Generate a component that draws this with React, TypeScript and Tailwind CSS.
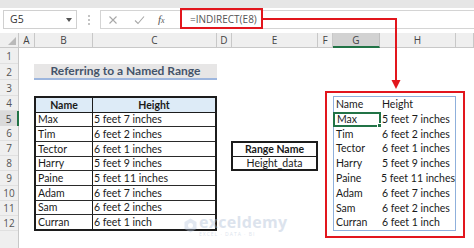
import React from "react";

const sheetRows: { n: number; h: string }[] = [
  { n: 1, h: "h-[16px]" },
  { n: 2, h: "h-[16px]" },
  { n: 3, h: "h-[16px]" },
  { n: 4, h: "h-[15px]" },
  { n: 5, h: "h-[15px]" },
  { n: 6, h: "h-[15px]" },
  { n: 7, h: "h-[15px]" },
  { n: 8, h: "h-[15px]" },
  { n: 9, h: "h-[15px]" },
  { n: 10, h: "h-[15px]" },
  { n: 11, h: "h-[15px]" },
  { n: 12, h: "h-[15px]" },
];

const data: [string, string][] = [
  ["Max", "5 feet 7 inches"],
  ["Tim", "6 feet 2 inches"],
  ["Tector", "6 feet 1 inches"],
  ["Harry", "5 feet 9 inches"],
  ["Paine", "5 feet 11 inches"],
  ["Adam", "6 feet 7 inches"],
  ["Sam", "6 feet 2 inches"],
  ["Curran", "6 feet 1 inch"],
];

const colHeaders = ["A", "B", "C", "D", "E", "F", "G", "H", ""];

export default function App() {
  return (
    <div
      className="relative w-[474px] h-[248px] overflow-hidden bg-white flex flex-col"
      style={{ fontFamily: "Lato, 'Open Sans', sans-serif" }}
    >
      {/* ribbon bottom band */}
      <div className="h-[8px] bg-[#e6e6e6] shrink-0" />

      {/* formula bar */}
      <div className="h-[25px] shrink-0 flex items-start pt-[2px] bg-white">
        <div className="ml-[3px] w-[74px] h-[19px] border border-[#d0d0d0] bg-white flex items-center justify-between pl-[6px] pr-[4px]">
          <span className="text-[10.5px] leading-none text-[#333]" style={{ fontFamily: "'Open Sans', sans-serif" }}>G5</span>
          <span className="w-0 h-0 border-l-[3px] border-r-[3px] border-t-[4px] border-l-transparent border-r-transparent border-t-[#555]" />
        </div>
        <div className="w-[23px] h-[19px] flex items-center justify-center">
          <div className="flex flex-col gap-[2px]">
            <span className="w-[2px] h-[2px] bg-[#c4c4c4]" />
            <span className="w-[2px] h-[2px] bg-[#c4c4c4]" />
            <span className="w-[2px] h-[2px] bg-[#c4c4c4]" />
          </div>
        </div>
        <div className="flex-1 h-[19px] border-l border-t border-b border-[#d4d4d4] flex items-center">
          <div className="flex items-center pl-[7px]">
            <svg width="10" height="10" viewBox="0 0 10 10">
              <path d="M1.5 1.5 L8.5 8.5 M8.5 1.5 L1.5 8.5" stroke="#a8a8a8" strokeWidth="1.1" fill="none" />
            </svg>
            <svg className="ml-[16px]" width="11" height="10" viewBox="0 0 11 10">
              <path d="M1 5.5 L4 8.5 L10 1.5" stroke="#a8a8a8" strokeWidth="1.1" fill="none" />
            </svg>
            <span className="ml-[13px] text-[11px] leading-none italic text-[#555]" style={{ fontFamily: "'Liberation Serif', serif" }}>
              f<span className="text-[8px]">x</span>
            </span>
          </div>
        </div>
      </div>

      {/* formula red box */}
      <div className="absolute left-[180px] top-[8px] w-[83px] h-[21px] border-2 border-[#e2161d] flex items-center pl-[8px]">
        <span className="text-[10px] leading-none text-[#555] whitespace-nowrap" style={{ fontFamily: "'Open Sans', sans-serif" }}>=INDIRECT(E8)</span>
      </div>

      {/* sheet */}
      <div className="flex-1 min-h-0 grid grid-cols-[19px_16px_58px_124px_15px_86px_15px_47px_76px_1fr] grid-rows-[15px_16px_16px_16px_15px_15px_15px_15px_15px_15px_15px_15px_15px_1fr]">
        {/* corner */}
        <div className="row-start-1 col-start-1 bg-[#efefef] border-r border-b border-[#c8c8c8] flex items-end justify-end p-[2px]">
          <svg width="8" height="8" viewBox="0 0 8 8">
            <polygon points="8,0 8,8 0,8" fill="#b9b9b9" />
          </svg>
        </div>
        {colHeaders.map((c) => (
          <div
            key={c || "I"}
            className={
              c === "G"
                ? "row-start-1 min-h-0 bg-[#d2d2d2] border-r border-[#c0c0c0] border-b-2 border-b-[#217346] flex items-center justify-center text-[10px] leading-none text-[#444]"
                : "row-start-1 min-h-0 bg-[#efefef] border-r border-b border-[#c8c8c8] flex items-center justify-center text-[10px] leading-none text-[#444]"
            }
            style={{ fontFamily: "'Open Sans', sans-serif" }}
          >
            {c}
          </div>
        ))}

        {/* row headers */}
        <div className="col-start-1 row-start-2 row-span-13 min-h-0 flex flex-col bg-[#efefef] border-r border-[#c8c8c8]" style={{ fontFamily: "'Open Sans', sans-serif" }}>
          {sheetRows.map((r) => (
            <div
              key={r.n}
              className={
                r.n === 5
                  ? `${r.h} shrink-0 flex items-center justify-center text-[10px] leading-none text-[#444] bg-[#dadada] border-r-2 border-[#217346] -mr-px`
                  : `${r.h} shrink-0 flex items-center justify-center text-[10px] leading-none text-[#555] border-b border-[#e0e0e0]`
              }
            >
              {r.n}
            </div>
          ))}
          <div className="flex-1" />
        </div>

        {/* title */}
        <div className="col-start-3 col-span-2 row-start-3 min-h-0 -ml-px bg-[#e7e6e6] border-b-2 border-[#9db6de] flex items-center justify-center">
          <span className="text-[12px] leading-none font-bold text-[#44546a] whitespace-nowrap">Referring to a Named Range</span>
        </div>

        {/* Name / Height table */}
        <div className="col-start-3 col-span-2 row-start-5 row-span-9 min-h-0 -ml-px border-2 border-[#1c1c1c] flex flex-col text-[10.5px] leading-none text-[#1a1a1a] whitespace-nowrap">
          <div className="flex-1 min-h-0 flex bg-[#ddebf7] border-b border-[#1c1c1c] font-bold">
            <div className="w-[57px] border-r border-[#1c1c1c] flex items-center justify-center">Name</div>
            <div className="flex-1 flex items-center justify-center">Height</div>
          </div>
          {data.map(([n, h], i) => (
            <div key={n} className={i < data.length - 1 ? "flex-1 min-h-0 flex border-b border-[#2a2a2a]" : "flex-1 min-h-0 flex"}>
              <div className="w-[57px] border-r border-[#1c1c1c] flex items-center pl-[2px]">{n}</div>
              <div className="flex-1 flex items-center pl-[1px]">{h}</div>
            </div>
          ))}
        </div>

        {/* Range Name table */}
        <div className="col-start-6 row-start-8 row-span-2 min-h-0 -ml-px border-2 border-[#1c1c1c] flex flex-col text-[10.5px] leading-none text-[#1a1a1a] whitespace-nowrap">
          <div className="flex-1 min-h-0 flex items-center justify-center font-bold border-b border-[#1c1c1c]">Range Name</div>
          <div className="flex-1 min-h-0 flex items-center justify-center">Height_data</div>
        </div>

        {/* result range */}
        <div className="col-start-8 col-span-2 row-start-5 row-span-9 min-h-0 border border-[#8fb0dc] flex flex-col text-[10.5px] leading-none text-[#1a1a1a] whitespace-nowrap">
          <div className="flex-1 min-h-0 flex">
            <div className="w-[47px] flex items-center pl-[2px]">Name</div>
            <div className="flex-1 flex items-center pl-[1px]">Height</div>
          </div>
          {data.map(([n, h], i) => (
            <div key={n} className="flex-1 min-h-0 flex">
              <div
                className={
                  i === 0
                    ? "relative w-[48px] -ml-px border-2 border-[#217346] flex items-center pl-[2px]"
                    : "w-[47px] flex items-center pl-[2px]"
                }
              >
                {n}
                {i === 0 && (
                  <span className="absolute -right-[3px] -bottom-[3px] w-[5px] h-[5px] bg-[#217346] border border-white" />
                )}
              </div>
              <div className="flex-1 flex items-center pl-[1px]">{h}</div>
            </div>
          ))}
        </div>
      </div>

      {/* red highlight rectangle */}
      <div className="absolute left-[325px] top-[91px] w-[140px] h-[147px] border-2 border-[#e2161d] pointer-events-none" />

      {/* red connector arrow */}
      <svg className="absolute left-0 top-0 pointer-events-none" width="474" height="248">
        <polyline points="263,19 396,19 396,82" stroke="#e2161d" strokeWidth="2" fill="none" />
        <polygon points="391.5,80 400.5,80 396,89" fill="#e2161d" />
      </svg>

      {/* watermark */}
      <div className="absolute left-[184px] top-[214px] flex items-center gap-[2px] opacity-40 pointer-events-none">
        <svg width="13" height="15" viewBox="0 0 13 15">
          <path d="M6.5 0.5 L12.5 4 L12.5 11 L6.5 14.5 L0.5 11 L0.5 4 Z" fill="#b9c8de" />
          <circle cx="6.5" cy="7.5" r="2.5" fill="#ffffff" />
        </svg>
        <div className="flex flex-col items-start leading-none">
          <span className="text-[16px] leading-none font-bold text-[#a9bad3] tracking-[0.3px]" style={{ fontFamily: "'Open Sans', sans-serif" }}>exceldemy</span>
          <span className="text-[5px] leading-none text-[#a9bad3] tracking-[1px] mt-[2px]" style={{ fontFamily: "'Open Sans', sans-serif" }}>EXCEL · DATA · BI</span>
        </div>
      </div>
    </div>
  );
}
